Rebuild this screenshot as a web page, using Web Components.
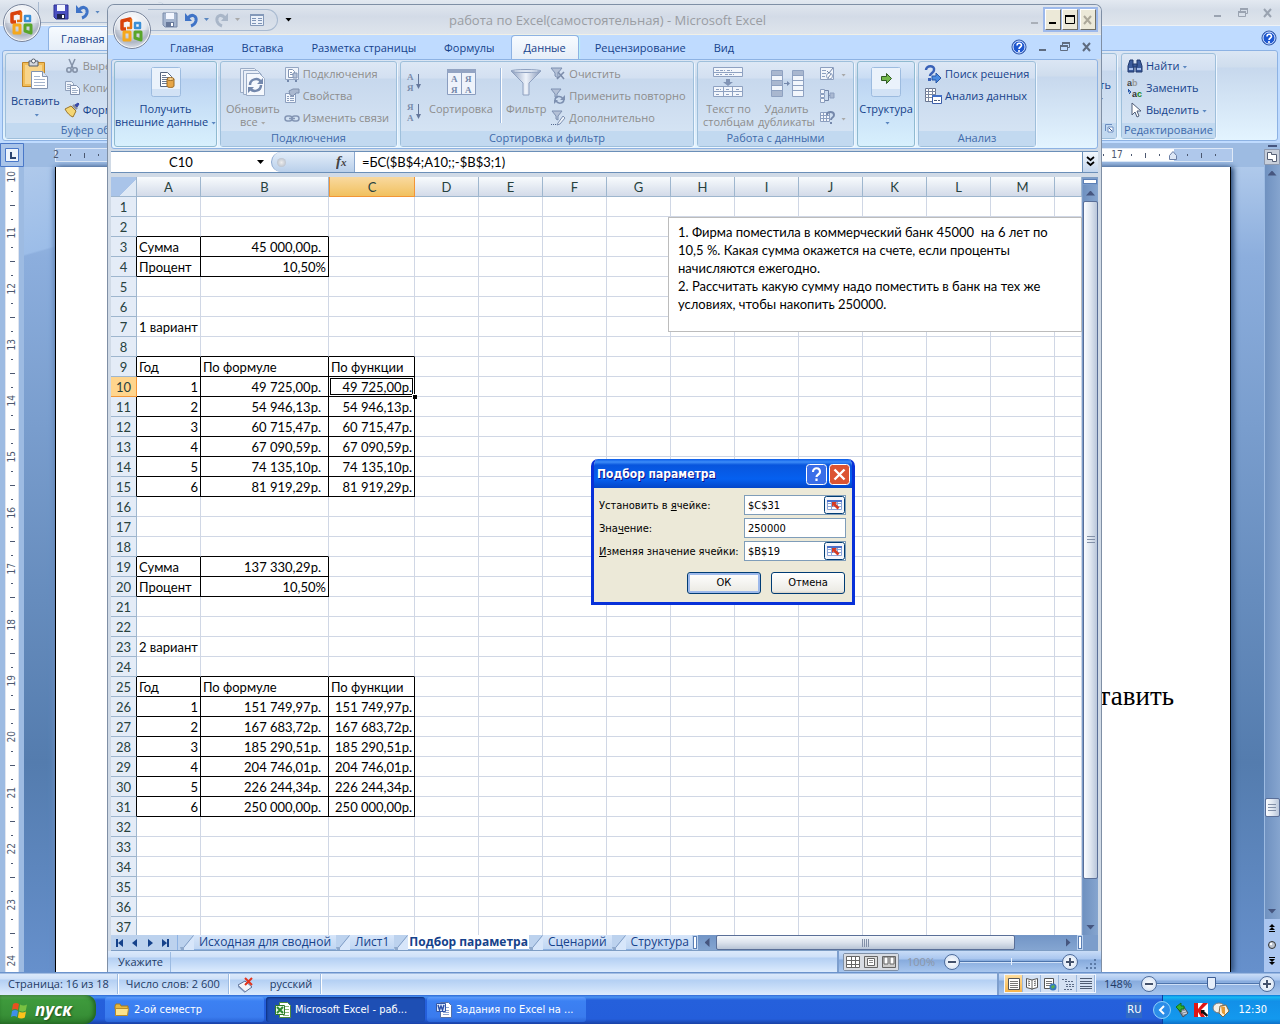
<!DOCTYPE html>
<html lang="ru">
<head>
<meta charset="utf-8">
<title>Microsoft Excel - работа по Excel</title>
<style>
    html, body {
        height: 100%;
        margin: 0;
    }

    body {
        font: 11px/14px "Open Sans", "Noto Sans", sans-serif;
        color: #15428b;
        overflow: hidden;
    }
</style>
</head>
<body>
<xp-desktop>
    <word-window></word-window>
    <excel-window></excel-window>
    <goal-dialog></goal-dialog>
    <task-bar slot="taskbar"></task-bar>
</xp-desktop>

<script>
// name: [width, height, svg content]
const ICONS = {
    office: [40, 40, `
        <defs>
            <radialGradient id="o" cx=".5" cy=".25" r=".8"><stop offset="0" stop-color="#fff"/><stop offset=".55" stop-color="#e3e7ee"/><stop offset=".75" stop-color="#b4bcc9"/><stop offset="1" stop-color="#f7f9fc"/></radialGradient>
        </defs>
        <circle cx="20" cy="20" r="18.500" fill="#f5f7fa" stroke="#77839a"/>
        <circle cx="20" cy="20" r="17" fill="url(#o)"/>
        <path d="M3 20a17 17 0 0 0 34 0z" fill="#9aa5b8" opacity=".25"/>
        <g fill="none" stroke-linejoin="round">
            <path d="M14 19h-4v-8l8-2v3" stroke="#d9420c" stroke-width="3.500"/><path d="M19 9v9h-4" stroke="#e8710f" stroke-width="2.500"/>
            <path d="M23 13h5v5h-5z" stroke="#3b8fd6" stroke-width="2.500"/>
            <path d="M12 22h6v8h-6z" stroke="#f5a81c" stroke-width="3"/>
            <path d="M23 22h6v8l-6-2z" stroke="#58a52a" stroke-width="3"/>
        </g>`],
    save: [16, 16, `<path d="M1 1h14v14H3l-2-2z" fill="#4a4fc0" stroke="#2d3192"/><path d="M4 1h8v6H4z" fill="#f3f6ff"/><path d="M4 10h8v5H4z" fill="#20254f"/><path d="M9 11h2v3H9z" fill="#fff"/>`],
    savegray: [16, 16, `<path d="M1 1h14v14H3l-2-2z" fill="#a4b4ce" stroke="#7d8dab"/><path d="M4 1h8v6H4z" fill="#f3f6ff"/><path d="M4 10h8v5H4z" fill="#68799a"/><path d="M9 11h2v3H9z" fill="#fff"/>`],
    undo: [16, 16, `<path d="M5 6c4-5 9-2 8 3-.5 2-2 4-5 5" fill="none" stroke="#3f73c7" stroke-width="3"/><path d="M2 1v8h7z" fill="#3f73c7"/>`],
    redo: [16, 16, `<path d="M11 6C7 1 2 4 3 9c.5 2 2 4 5 5" fill="none" stroke="#a9b6c8" stroke-width="3"/><path d="M14 1v8H7z" fill="#a9b6c8"/>`],
    form: [16, 16, `<path d="M1.500 2.500h13v11h-13z" fill="#eaf0f9" stroke="#8398b8"/><path d="M1 2h14v2H1z" fill="#8398b8"/><path d="M3 6.500h4M3 8.500h4M3 11.500h4M9 6.500h4M9 8.500h4M9 11.500h4" stroke="#7d93b6"/>`],
    paste: [32, 32, `<path d="M3.500 4.500h22v24h-22z" fill="#f1bd58" stroke="#c08527"/><path d="M6 7h17v19H6z" fill="#f8d48a"/><path d="M10 3h9v5h-9z" fill="#d4d8de" stroke="#555d69"/><circle cx="14.500" cy="3" r="2" fill="#fff" stroke="#555d69"/><path d="M12.500 13.500h11l5 5v12h-16z" fill="#fff" stroke="#8293af"/><path d="M23.500 13.500v5h5" fill="#dde6f3" stroke="#8293af"/><path d="M15 18.500h6M15 21.500h11M15 24.500h11M15 27.500h11" stroke="#a4b3cb"/>`],
    cut: [16, 16, `<path d="M5 1l4 9M11 1L7 10" stroke="#8492a8" stroke-width="1.500"/><circle cx="5" cy="12" r="2.200" fill="none" stroke="#8492a8" stroke-width="1.600"/><circle cx="11" cy="12" r="2.200" fill="none" stroke="#8492a8" stroke-width="1.600"/>`],
    copy: [16, 16, `<path d="M1.500 1.500h6l2 2v7h-8z" fill="#eef3fa" stroke="#8fa0bb"/><path d="M3 4.500h4M3 6.500h5M3 8.500h4" stroke="#9fafc7"/><path d="M6.500 5.500h6l3 3v6h-9z" fill="#f7faff" stroke="#8090ad"/><path d="M8 8.500h4M8 10.500h6M8 12.500h5" stroke="#9fafc7"/>`],
    brush: [16, 16, `<path d="M1 7l6-3 5 5-3 6C6 14 3 11 1 7z" fill="#f4d674" stroke="#9b7529"/><path d="M8 4l4 4 2-2-4-4z" fill="#8a8fa0"/><path d="M11 3l3-2 1 1-2 3z" fill="#3647a8" stroke="#3647a8"/>`],
    getdata: [32, 32, `<rect x="1.500" y="1.500" width="29" height="29" rx="2" fill="#d2e2f5" stroke="#9cbbdf"/><path d="M2 2h28v21H2z" fill="#eaf2fb"/><path d="M10.500 6.500h7l4 4v10h-11z" fill="#fff" stroke="#55657e"/><path d="M12 9.500h4M12 11.500h7M12 13.500h5M12 15.500h5M12 17.500h5" stroke="#6a7a93"/><path d="M17 13v7c0 2 7 2 7 0v-7z" fill="#e7a647" stroke="#9b6a25"/><ellipse cx="20.500" cy="13" rx="3.500" ry="1.500" fill="#fbd592" stroke="#9b6a25"/>`],
    refresh: [32, 32, `<g fill="#e9eff8" stroke="#9bacc6"><path d="M3.500 2.500h14l4 4v20h-18z"/><path d="M6.500 4.500h14l4 4v20h-18z"/><path d="M9.500 7.500h13l5 5v17h-18z" fill="#f5f8fd"/></g><path d="M13 19c0-6 8-8 11-3M24 19c0 6-8 8-11 3" fill="none" stroke="#7388ad" stroke-width="2.500"/><path d="M26 12v6h-6zM11 27v-6h6z" fill="#7388ad"/>`],
    connections: [16, 16, `<path d="M1.500 1.500h13v12h-13z" fill="#eef3fb" stroke="#94a6c3"/><path d="M4.500 3.500h4l2 2v6h-6z" fill="#fff" stroke="#8294b3"/><path d="M6 6.500h2M6 8.500h3" stroke="#8294b3"/><path d="M9 7h4v5H9z" fill="#b5c2d8" stroke="#8294b3"/><path d="M3 15h2M11 15h2" stroke="#7489ac" stroke-width="2"/>`],
    properties: [16, 16, `<path d="M1.500 5.500h10v9h-10z" fill="#f3f7fd" stroke="#8c9fbe"/><path d="M3 8.500h2M3 10.500h2M3 12.500h2M6 8.500h4M6 10.500h4M6 12.500h4" stroke="#8c9fbe"/><path d="M5 3l4-2h6v4h-3l-3 3-3-1z" fill="#aab8cf" stroke="#7f90ad"/>`],
    links: [16, 16, `<g fill="none" stroke="#8496b5" stroke-width="1.500"><rect x="1" y="6" width="7" height="5" rx="2.500"/><rect x="8" y="6" width="7" height="5" rx="2.500"/><path d="M5 8.500h6"/></g>`],
    sortaz: [16, 20, `<g font-family="Liberation Serif" font-weight="bold" font-size="9" fill="#7a8cab"><text x="1" y="8">А</text><text x="1" y="19">Я</text></g><path d="M12.500 2v12" stroke="#64779b"/><path d="M10 12h5l-2.500 5z" fill="#64779b"/>`],
    sortza: [16, 20, `<g font-family="Liberation Serif" font-weight="bold" font-size="9" fill="#7a8cab"><text x="1" y="8">Я</text><text x="1" y="19">А</text></g><path d="M12.500 2v12" stroke="#64779b"/><path d="M10 12h5l-2.500 5z" fill="#64779b"/>`],
    sort: [32, 32, `<path d="M2.500 3.500h28v25h-28z" fill="#eef3fb" stroke="#8a9dbf"/><path d="M2 3h29v4H2z" fill="#93a4c3"/><path d="M16.500 7v22" stroke="#8a9dbf"/><g font-family="Liberation Serif" font-weight="bold" font-size="9" fill="#7286aa"><text x="6" y="16">А</text><text x="6" y="27">Я</text><text x="20" y="16">Я</text><text x="20" y="27">А</text></g>`],
    funnel: [32, 32, `<defs><linearGradient id="f"><stop offset="0" stop-color="#8b9dbd"/><stop offset=".5" stop-color="#eef3fb"/><stop offset="1" stop-color="#8798b8"/></linearGradient></defs><path d="M1 5h30L19 17v12h-6V17z" fill="url(#f)" stroke="#8fa1c0"/><ellipse cx="16" cy="5" rx="15" ry="1.500" fill="#dfe7f3" stroke="#8fa1c0"/>`],
    clear: [16, 16, `<path d="M1 2h11L8 7v5l-3-2V7z" fill="#b4c1d7" stroke="#7d90b1"/><path d="M8 6l6 7M14 6l-7 7" stroke="#7d8dab" stroke-width="1.600"/>`],
    reapply: [16, 16, `<path d="M1 1h10L7 6v4L5 9V6z" fill="#b4c1d7" stroke="#7d90b1"/><path d="M5 12c0-4 6-5 8-1M14 12c-1 4-6 4-8 1" fill="none" stroke="#7d90b1" stroke-width="1.500"/><path d="M15 7v5h-5zM4 16v-4h4z" fill="#7d90b1"/>`],
    advanced: [16, 16, `<path d="M2 1h10L8 6v4L6 9V6z" fill="#b4c1d7" stroke="#7d90b1"/><path d="M1 14.500h7" stroke="#54698f" stroke-dasharray="1 1"/><path d="M8 13l5-7 2 2-5 6-3 1z" fill="#eef3fa" stroke="#7d90b1"/>`],
    textcols: [32, 32, `<g fill="#f2f6fc" stroke="#8ea1c1"><path d="M1.500 1.500h29v9h-29zM1.500 20.500h29v10h-29z"/><path d="M1 6.500h29M1 25.500h29M11.500 20v10M20.500 20v10" fill="none"/></g><path d="M4 4.500h9M15 4.500h5M4 8.500h6M13 8.500h9M4 23.500h5M14 23.500h4M24 23.500h4M4 28.500h4M14 28.500h4M24 28.500h4" stroke="#8ea1c1" stroke-dasharray="3 1"/><path d="M14 13h4v3h3l-5 4-5-4h3z" fill="#8194b5"/>`],
    dedupe: [34, 32, `<g stroke="#8ea1c1" fill="#f2f6fc"><path d="M1.500 4.500h11v26h-11zM22.500 4.500h11v26h-11z"/></g><g fill="#a9b7cf"><path d="M2 5h10v5H2zM2 15h10v5H2zM2 25h10v5H2zM23 5h10v5H23z"/></g><path d="M2 9.500h10M2 14.500h10M2 19.500h10M2 24.500h10M23 9.500h10M23 14.500h10M23 19.500h10M23 24.500h10" stroke="#8ea1c1"/><path d="M14 17.500h4" stroke="#7488ac"/><path d="M17 15v5l3-2.500z" fill="#7488ac"/>`],
    validate: [16, 16, `<path d="M1.500 1.500h13v12h-13z" fill="#f1f5fb" stroke="#8c9fbf"/><path d="M3 4.500h4M3 7.500h4M3 10.500h3" stroke="#8c9fbf"/><circle cx="10.500" cy="10" r="3" fill="#fff" stroke="#8c9fbf"/><path d="M8 5l2 2 4-5M9 12l3-4" fill="none" stroke="#7285a7"/>`],
    consolidate: [16, 16, `<path d="M1.500 1.500h4v4h-4zM1.500 6.500h4v3h-4zM1.500 10.500h4v4h-4z" fill="#f1f5fb" stroke="#8c9fbf"/><path d="M6 2.500h3.500v10H6M9 7.500h2" fill="none" stroke="#7285a7"/><path d="M11 5h4v5h-4z" fill="#aab9d2" stroke="#8c9fbf"/>`],
    whatif: [16, 16, `<path d="M1.500 2.500h9v9h-9z" fill="#f1f5fb" stroke="#8c9fbf"/><path d="M1 5.500h9M1 8.500h9M4.500 2v9M7.500 2v9" stroke="#8c9fbf"/><path d="M8 5c0-4 7-4 7 0 0 3-3 2-3 5" fill="none" stroke="#7588ab" stroke-width="2"/><path d="M11 12h2v2h-2z" fill="#7588ab"/>`],
    outline: [32, 32, `<rect x="1.500" y="1.500" width="29" height="29" rx="2" fill="#d2e2f5" stroke="#9cbbdf"/><path d="M2 2h28v21H2z" fill="#eaf2fb"/><path d="M11.500 10.500h5v-3l5 5-5 5v-3h-5z" fill="#72b74a" stroke="#2f5a25"/>`],
    solver: [18, 18, `<path d="M2 5c0-5 9-5 8 0 0 3-4 3-4 6" fill="none" stroke="#3a62b8" stroke-width="2.500"/><path d="M4 13h3v3H4z" fill="#3a62b8"/><path d="M8 11h4V8l5 5-5 5v-3H8z" fill="#4a8be0" stroke="#2757a8"/>`],
    analysis: [18, 18, `<path d="M1.500 1.500h10v13h-10z" fill="#fff" stroke="#6a7690"/><path d="M1 4.500h11M1 7.500h11M1 10.500h11M4.500 1v13M8.500 1v13" stroke="#7c88a0"/><path d="M8.500 8.500h9v8h-9z" fill="#fff" stroke="#3b5da8"/><path d="M8 8h10v2H8z" fill="#4270c8"/><path d="M10 13.500h3M14 13.500h2" stroke="#4a5a7a"/>`],
    find: [16, 16, `<g fill="#3c5c9c" stroke="#20386c"><path d="M3 2h3v5l1 2v5H1V8zM10 2h3l2 6v6H9V9l1-2z"/><path d="M6 6h4v3H6z"/></g><path d="M2 11h4M10 11h4" stroke="#a8c0ec" stroke-width="2"/>`],
    replace: [16, 20, `<g font-family="Liberation Sans" font-weight="bold" font-size="9"><text x="0" y="8" fill="#444">a<tspan fill="#999">b</tspan></text><text x="5" y="19" fill="#333">a<tspan fill="#1a8a22">c</tspan></text></g><path d="M1.500 11v3H4M2 12l2 2-2 2" fill="none" stroke="#2757a8"/>`],
    cursor: [16, 16, `<path d="M5 1v12l3-3 2 5 2-1-2-5h4z" fill="#fff" stroke="#4f5d78"/>`],
    help: [16, 16, `<circle cx="8" cy="8" r="7" fill="#1d57d0" stroke="#2a4f9c"/><circle cx="8" cy="8" r="6" fill="none" stroke="#dbe8ff"/><path d="M6 6.500c0-3 4.500-3 4.500 0C10.500 8 8 8 8 10M8 11v2" fill="none" stroke="#fff" stroke-width="1.600"/>`],
    min: [12, 12, `<path d="M2 9h7" stroke="currentColor" stroke-width="2"/>`],
    restore: [12, 12, `<path d="M3.500 4V1.500h7v5H9M1.500 4.500h7v5h-7z" fill="none" stroke="currentColor"/><path d="M3 2h8M1 5h8" stroke="currentColor" stroke-width="2"/>`],
    max: [12, 12, `<path d="M1.500 1.500h9v8h-9z" fill="none" stroke="currentColor"/><path d="M1 2h10" stroke="currentColor" stroke-width="2"/>`],
    close: [12, 12, `<path d="M2 2l7 8M9 2l-7 8" stroke="currentColor" stroke-width="2"/>`],
    fx: [14, 16, `<text x="0" y="12" font-family="Liberation Serif" font-style="italic" font-weight="bold" font-size="15" fill="#444">f<tspan font-size="11">x</tspan></text>`],
    expand: [12, 14, `<path d="M2 3l3.500 3L9 3M2 8l3.500 3L9 8" fill="none" stroke="#000" stroke-width="1.800"/>`],
    tabstop: [24, 24, `<path d="M.500.500h23v23H.500z" fill="#a9c4e9" stroke="#4a78c8"/><path d="M5.500 5.500h13v13h-13z" fill="#eef4fc" stroke="#4a78c8"/><path d="M11 9v6h5" fill="none" stroke="#2b4470" stroke-width="2"/>`],
    indent: [10, 10, `<path d="M1.500 9.500v-4L5 1.500l3.500 4v4z" fill="#dce6f5" stroke="#6b7fa5"/>`],
    rulerbtn: [16, 16, `<path d="M.500.500h15v15H.500z" fill="#c8cfdb" stroke="#8d99af"/><path d="M3.500 3.500h4v2h5v7h-4v-2h-5z" fill="#fff" stroke="#555f75"/>`],
    launcher: [10, 10, `<path d="M1.500 8V1.500H8" fill="none" stroke="#6a8cc0"/><path d="M4 4h5v5H4z" fill="#fff" stroke="#6a8cc0"/><path d="M5 5l3 3" stroke="#3c5c94"/>`],
    pageup: [10, 12, `<path d="M5 2L2 5h6zM5 5L2 8h6zM2 9h6v1H2z" fill="#000"/>`],
    ball: [10, 10, `<circle cx="5" cy="5" r="3.500" fill="#bcc3cf" stroke="#333"/><circle cx="4" cy="4" r="1.200" fill="#fff"/>`],
    pagedown: [10, 12, `<path d="M2 1h6v1H2zM2 3h6L5 6zM2 6h6L5 9z" fill="#000"/>`],
    first: [10, 10, `<path d="M1 1h2v8H1zM8 1v8L3 5z" fill="#15428b"/>`],
    prev: [10, 10, `<path d="M7 1v8L2 5z" fill="#15428b"/>`],
    next: [10, 10, `<path d="M3 1v8l5-4z" fill="#15428b"/>`],
    last: [10, 10, `<path d="M7 1h2v8H7zM2 1v8l5-4z" fill="#15428b"/>`],
    normal: [14, 12, `<path d="M.500.500h13v11H.500zM0 4.500h14M0 8.500h14M5.500 0v12M9.500 0v12" fill="#fff" stroke="#666"/>`],
    layout: [14, 12, `<path d="M.500.500h13v11H.500z" fill="#ddd" stroke="#666"/><path d="M3.500 2.500h7v7h-7z" fill="#fff" stroke="#666"/><path d="M5 4.500h4M5 6.500h4" stroke="#888"/>`],
    breaks: [14, 12, `<path d="M.500.500h13v11H.500z" fill="#ccc" stroke="#666"/><path d="M2 1h4v7H2zM8 1h4v7H8z" fill="#fff" stroke="#666"/>`],
    print: [14, 14, `<path d="M1.500 1.500h11v11h-11z" fill="#fff" stroke="#555"/><path d="M3 4.500h8M3 6.500h8M3 8.500h8M3 10.500h8" stroke="#777"/>`],
    reading: [14, 14, `<path d="M7 3L1.500 1.500v9L7 12l5.500-1.500v-9z" fill="#fff" stroke="#555"/><path d="M7 3v10M3 4l2 .5M3 6l2 .5M3 8l2 .5M9 4.500l2-.5M9 6.500l2-.5M9 8.500l2-.5" stroke="#666"/>`],
    web: [14, 14, `<path d="M1.500 1.500h9v10h-9z" fill="#fff" stroke="#555"/><path d="M3 4.500h6M3 6.500h6M3 8.500h4" stroke="#777"/><circle cx="10" cy="10" r="3.500" fill="#3878c0"/><path d="M8 9l3-1 1 2-3 2z" fill="#56b04c"/>`],
    outlineview: [14, 14, `<path d="M1 2.500h6M4 4.500h9M5 7.500h8M5 9.500h8M3 12.500h9" stroke="#5b6b86" stroke-dasharray="2 1"/>`],
    draft: [14, 14, `<path d="M1 1.500h12M1 4.500h12M1 6.500h12M1 9.500h12M1 11.500h12" stroke="#4f5c72"/>`],
    spell: [18, 16, `<path d="M1 8l7-4 7 6-7 5z" fill="#f4f6fa" stroke="#5b6f95"/><path d="M1 8l7 6v2L1 10z" fill="#7f93b8"/><path d="M8 1l7 7M15 1L8 8" stroke="#e2341d" stroke-width="2"/>`],
    pick: [21, 18, `<rect x=".500" y=".500" width="20" height="17" rx="2" fill="#f4f5fa" stroke="#003c74"/><path d="M3.500 4.500h14v9h-14zM3 7.500h14M3 10.500h14M7.500 4v9M13.500 4v9" fill="#fff" stroke="#8ba4d8"/><path d="M3 4h15v2H3z" fill="#4c70c8"/><path d="M8 6h5l-1.500 1.500 4 4-2 2-4-4L8 11z" fill="#d63a22"/>`],
    flag: [20, 18, `<path d="M3 3c2-1.500 4-1.500 6 0L8 9C6 7.500 4 7.500 2 9z" fill="#e8501f"/><path d="M10 3.500c2 1.200 5 1.200 7 0l-1.200 6C14 11 11 11 9 9.500z" fill="#7ac142"/><path d="M2 10c2-1.500 4-1.500 6 0l-1 6c-2-1.500-4-1.500-6 0z" fill="#3f8fe8"/><path d="M9 10.500c2 1.200 5 1.200 7 0l-1.200 6c-2 1.200-5 1.200-7 0z" fill="#fcc21b"/>`],
    folder: [16, 16, `<path d="M1 4l1-2h4l1 2h7v3H1z" fill="#e8b93e" stroke="#a87d1c"/><path d="M1.500 6.500h13l-1 7h-12z" fill="#fde48c" stroke="#b98d28"/>`],
    excel: [16, 16, `<path d="M4.500.500h8l3 3v12h-11z" fill="#fff" stroke="#4f8a3d"/><path d="M8 4.500h6M8 7.500h6M8 10.500h6M8 13.500h6" stroke="#8cba80"/><path d="M.500 3.500h9v9h-9z" fill="#eaf6e4" stroke="#2f7a2a"/><path d="M2 5l6 6M8 5l-6 6" stroke="#2b8a2f" stroke-width="2"/>`],
    word: [16, 16, `<path d="M4.500.500h8l3 3v12h-11z" fill="#fff" stroke="#5470a8"/><path d="M7 5.500h6M7 8.500h6M7 10.500h6M7 12.500h6" stroke="#8fa6d4"/><path d="M.500 1.500h9v8h-9z" fill="#dce7fa" stroke="#3157a8"/><path d="M2 3l1.500 5L5 4l1.500 4L8 3" fill="none" stroke="#2a4fa8" stroke-width="1.400"/>`],
    chevron: [18, 18, `<circle cx="9" cy="9" r="8.500" fill="#2b8de8" stroke="#8fd0fb"/><path d="M11 5L7 9l4 4" fill="none" stroke="#fff" stroke-width="2"/>`],
    usb: [16, 16, `<path d="M4 7l6-2 4 6-5 4z" fill="#8b93a0" stroke="#4a525e"/><path d="M8 10l4-1M9 12l4-1" stroke="#d8dde5"/><path d="M2 5l5-4v3h3v3H7v3z" fill="#34b22f" stroke="#14701a"/>`],
    kasper: [16, 16, `<path d="M1 1h14v14H1z" fill="#fff"/><path d="M1 1h4v6l5-6h5L8 8l4 7H8L5 10v5H1z" fill="#e01616"/><path d="M8 8h4l-1 1 4 4-1 2-5-4-1 1z" fill="#111"/>`],
    disc: [18, 16, `<ellipse cx="7" cy="6" rx="6" ry="5" fill="#f3f0ea" stroke="#777"/><path d="M8 4l6-1 3 6-6 6-4-4z" fill="#f7efdc" stroke="#7b6a4a"/><path d="M9 4l4 1v8l-3-2z" fill="#e59a34"/>`],
    grip: [12, 12, `<path d="M9 1h2v2H9zM5 5h2v2H5zM9 5h2v2H9zM1 9h2v2H1zM5 9h2v2H5zM9 9h2v2H9z" fill="#5c7ba8"/>`],
    qmark: [21, 21, `<rect x=".500" y=".500" width="20" height="20" rx="3" fill="#3a6ee8" stroke="#fff"/><path d="M7 8c0-5 7-5 7 0 0 2.500-3.500 2.500-3.500 5M10.500 14.500v2.500" fill="none" stroke="#fff" stroke-width="2.200"/>`],
    xmark: [21, 21, `<rect x=".500" y=".500" width="20" height="20" rx="3" fill="#dc5432" stroke="#fff"/><path d="M5.500 5.500l10 10M15.500 5.500l-10 10" stroke="#fff" stroke-width="2.400"/>`],
    slant: [14, 15, `<path d="M2 15h12V0z" fill="#d7e6fa"/><path d="M2 14.500L13.500.500" stroke="#7f9cc4" fill="none"/><path d="M0 12h4v3H1z" fill="#8fa9cc"/>`],
};

function define(name, markup) {
    customElements.define(name, class extends HTMLElement {
        constructor() {
            super();
            this.attachShadow({ mode: 'open' });
            const template = document.createElement('template');
            template.innerHTML = markup;
            this.shadowRoot.appendChild(template.content.cloneNode(true));
        }
    });
}

class UiIcon extends HTMLElement {
    constructor() {
        super();
        this.attachShadow({ mode: 'open' });
    }

    connectedCallback() {
        const [w, h, body] = ICONS[this.getAttribute('name')];
        this.shadowRoot.innerHTML = `
            <style>:host { display: inline-block; flex: none; } svg { display: block; }</style>
            <svg width="${w}" height="${h}" viewBox="0 0 ${w} ${h}" aria-hidden="true">${body}</svg>`;
    }
}
customElements.define('ui-icon', UiIcon);

define('down-arrow', `
    <style>
        :host { display: inline-block; width: 5px; height: 3px; background: #5b87c0; clip-path: polygon(0 0, 100% 0, 50% 100%); vertical-align: middle; flex: none; }
        :host([muted]) { background: #a9a9a9; }
        :host([dark]) { width: 7px; height: 4px; background: #000; }
    </style>
`);

define('ribbon-tab', `
    <style>
        :host { display: block; }
        button {
            font: inherit; color: #15428b; height: 24px; padding: 2px 14px 0; border: 0;
            background: none; display: block; white-space: nowrap;
        }
        :host([active]) button {
            border: 1px solid #8db2e3; border-bottom: 0; border-radius: 4px 4px 0 0; padding: 1px 12px 0;
            margin: 0 2px; background: linear-gradient(#f7fbff, #e6eef8); box-shadow: 1px 0 1px #b8f0f8;
        }
    </style>
    <button type="button"><slot></slot></button>
`);

define('ribbon-group', `
    <style>
        :host {
            display: flex; flex-direction: column; box-sizing: border-box; height: 86px; flex: none;
            border: 1px solid #9ebfdb; border-radius: 3px;
            background: linear-gradient(#dde8f5, #d3e0f1 16px, #c7d8ed 17px, #d8e6f5);
            box-shadow: 1px 1px 0 #eef6ff;
        }
        .content { flex: 1; display: flex; padding: 1px 3px; min-height: 0; }
        .label { height: 15px; line-height: 14px; padding: 0 2px; text-align: center; color: #3e6aaa; background: #c2d9f0; white-space: nowrap; display: flex; justify-content: center; }
        .label span { flex: 1; }
        :host([collapsed]) { background: linear-gradient(#dce9f9, #c9dcf3 16px, #bcd4f2 17px, #d8f0fd); border-color: #8fbad0; }
        :host([collapsed]) .label { display: none; }
        :host([collapsed]) .content { justify-content: center; padding: 1px 0; }
    </style>
    <div class="content"><slot></slot></div>
    <div class="label"><span><slot name="label"></slot></span><slot name="launcher"></slot></div>
`);

define('ribbon-column', `
    <style>
        :host { display: flex; flex-direction: column; }
        :host([spread]) { padding-top: 8px; gap: 8px; }
    </style>
    <slot></slot>
`);

class RibbonButton extends HTMLElement {
    constructor() {
        super();
        this.attachShadow({ mode: 'open' });
    }

    // a large button breaks its label at "|"
    connectedCallback() {
        const muted = this.hasAttribute('muted') ? 'muted' : '';
        const arrow = this.hasAttribute('arrow') ? `<down-arrow ${muted}></down-arrow>` : '';
        const label = (this.getAttribute('label') || '').split('|').join('<br>');
        this.shadowRoot.innerHTML = `
            <style>
                :host { display: block; flex: none; }
                button {
                    font: inherit; color: #15428b; background: none; border: 0; margin: 0; height: 22px;
                    display: flex; align-items: center; gap: 3px; padding: 0 2px; white-space: nowrap;
                }
                button.muted { color: #8d8d8d; }
                down-arrow { margin-left: 3px; }
                :host([large]) button { flex-direction: column; height: 66px; padding: 3px 2px 0; gap: 4px; line-height: 13px; }
            </style>
            <button type="button" class="${muted}">
                <ui-icon name="${this.getAttribute('icon')}"></ui-icon>
                <span>${label}${arrow}</span>
            </button>`;
    }
}
customElements.define('ribbon-button', RibbonButton);

class ScrollBar extends HTMLElement {
    constructor() {
        super();
        this.attachShadow({ mode: 'open' });
    }

    connectedCallback() {
        const before = this.getAttribute('before') || 0;
        const after = this.getAttribute('after') || 0;
        const size = this.getAttribute('size');
        this.shadowRoot.innerHTML = `
            <style>
                :host { display: flex; flex-direction: column; width: 15px; background: linear-gradient(90deg, #6f91c0, #86a5cf); }
                .thumb {
                    box-sizing: border-box; border: 1px solid #5a6f98; border-radius: 2px; flex: ${size} 0 0; min-height: 16px; min-width: 15px;
                    background: linear-gradient(90deg, #fafcff, #dfe6f0 50%, #b9c6da); display: grid; place-items: center;
                }
                .grip { width: 8px; height: 8px; background: repeating-linear-gradient(#8290a8 0 1px, transparent 1px 3px); }
                .end { flex: 0 0 16px; display: grid; place-items: center; }
                .end i { width: 9px; height: 5px; background: #46567f; clip-path: polygon(50% 0, 100% 100%, 0 100%); }
                .end.last i { clip-path: polygon(0 0, 100% 0, 50% 100%); }
                :host([horizontal]) { flex-direction: row; width: auto; height: 15px; background: linear-gradient(#7295c6, #84a5d1); }
                :host([horizontal]) .thumb { background: linear-gradient(#f5f8fc, #dce3ed 50%, #b8c4d6); min-height: 0; }
                :host([horizontal]) .grip { background: repeating-linear-gradient(90deg, #8290a8 0 1px, transparent 1px 2px); }
                :host([horizontal]) .end { flex-basis: 18px; }
                :host([horizontal]) .end i { width: 5px; height: 9px; clip-path: polygon(0 50%, 100% 0, 100% 100%); }
                :host([horizontal]) .end.last i { clip-path: polygon(0 0, 100% 50%, 0 100%); }
            </style>
            <div class="end"><i></i></div>
            <div style="flex: ${before}"></div>
            <div class="thumb"><div class="grip"></div></div>
            <div style="flex: ${after}"></div>
            <div class="end last"><i></i></div>`;
    }
}
customElements.define('scroll-bar', ScrollBar);

class ZoomSlider extends HTMLElement {
    constructor() {
        super();
        this.attachShadow({ mode: 'open' });
    }

    connectedCallback() {
        this.shadowRoot.innerHTML = `
            <style>
                :host { display: flex; align-items: center; }
                button {
                    width: 16px; height: 16px; padding: 0; border: 1px solid #4f6d9c; border-radius: 50%; flex: none; position: relative;
                    background: radial-gradient(#fff, #ccdcf2);
                }
                button::before, button.plus::after { content: ""; position: absolute; left: 3px; top: 6px; width: 8px; height: 2px; background: #44526c; }
                button.plus::after { transform: rotate(90deg); }
                input {
                    appearance: none; width: 102px; height: 16px; margin: 0;
                    background: linear-gradient(#e8f1fd, #e8f1fd) center / 1px 7px no-repeat, linear-gradient(#4d74ac 1px, #cfe0f7 1px) center / 100% 2px no-repeat;
                }
                input::-webkit-slider-thumb {
                    appearance: none; width: 9px; height: 13px; background: #e6eefa; border: 1px solid #3f5f94; border-radius: 1px 1px 5px 5px;
                }
                :host([nothumb]) input::-webkit-slider-thumb { opacity: 0; }
            </style>
            <button type="button" aria-label="Уменьшить"></button>
            <input type="range" aria-label="Масштаб" min="0" max="100" value="${this.getAttribute('value')}">
            <button type="button" class="plus" aria-label="Увеличить"></button>`;
    }
}
customElements.define('zoom-slider', ZoomSlider);

// ruler marks: number, dot, half-centimetre line, dot
class RulerMarks extends HTMLElement {
    constructor() {
        super();
        this.attachShadow({ mode: 'open' });
    }

    connectedCallback() {
        const marks = this.getAttribute('marks').split(' ').map(mark => {
            if (mark === '.') return '<i class="dot"></i>';
            if (mark === '-') return '<i class="line"></i>';
            if (mark === '^') return '<ui-icon name="indent"></ui-icon>';
            return `<span>${mark}</span>`;
        });
        this.shadowRoot.innerHTML = `
            <style>
                :host { display: flex; font: 10px/12px "DejaVu Sans Condensed", sans-serif; color: #4c5870; overflow: hidden; }
                div { flex: 0 0 14px; display: grid; place-items: center; }
                .dot { width: 1px; height: 2px; background: #4c5870; }
                .line { width: 1px; height: 5px; background: #4c5870; }
                :host([vertical]) { flex-direction: column; }
                :host([vertical]) span { writing-mode: vertical-rl; transform: rotate(180deg); }
                :host([vertical]) .dot { width: 2px; height: 1px; }
                :host([vertical]) .line { width: 5px; height: 1px; }
            </style>
            ${marks.map(mark => `<div>${mark}</div>`).join('')}`;
    }
}
customElements.define('ruler-marks', RulerMarks);

let verticalMarks = [];
for (let i = 10; i < 25; i++) {
    verticalMarks.push(i, '.', '-', '.');
}

define('word-window', `
    <style>
        :host { display: flex; flex-direction: column; height: 100%; background: #bfdbff; }
        .caption { flex: 0 0 26px; display: flex; align-items: center; background: linear-gradient(#e3e9f1, #d5dde8 40%, #dfe5ec); border-bottom: 1px solid #eef2f6; box-sizing: border-box; }
        .office { position: absolute; left: 2px; top: 3px; }
        .qat { display: flex; align-items: center; gap: 5px; margin-left: 38px; padding-left: 14px; width: 130px; height: 21px; border: 1px solid #a9bad0; border-top: 0; border-radius: 0 11px 11px 0; box-sizing: border-box; }
        .controls { margin-left: auto; display: flex; gap: 13px; color: #9aa3b1; padding-right: 6px; }
        .tabs { flex: 0 0 24px; display: flex; align-items: flex-end; padding-left: 46px; }
        .tabs ui-icon { margin: 0 3px 4px auto; }
        .ribbon { flex: none; margin: 0 2px; display: flex; box-sizing: border-box; height: 91px; padding: 2px 2px; border: 1px solid #8db2e3; border-radius: 3px; background: linear-gradient(#dbe6f4, #cfdded 16px, #c7d8ed 17px, #e3f4ff); }
        .ribbon .clipboard { min-width: 170px; }
        .ribbon .styles { margin-left: auto; margin-right: 4px; }
        .ribbon .edit { margin-right: 59px; min-width: 93px; }
        .body { flex: 1; display: grid; grid-template: 24px 1fr / 24px 1fr 16px; min-height: 0; margin-top: 2px; background: #9dbbe2; }
        .hruler { display: flex; align-items: center; padding: 0 31px; }
        .hruler div { flex: 1; display: flex; justify-content: space-between; height: 12px; border: 1px solid #dfe9f7; background: linear-gradient(90deg, #afc8eb 58px, #fff 58px calc(100% - 58px), #afc8eb calc(100% - 58px)); }
        .left { margin-left: -7px; }
        .right { margin-right: 10px; }
        .vruler { overflow: hidden; margin: 0 5px; border: solid #dfe5f0; border-width: 0 1px; background: #fff; padding-top: 3px; }
        .canvas { min-width: 0; padding: 0 33px 0 31px; background: linear-gradient(164deg, #afc9eb, #9cbde8 84px, transparent 86px), linear-gradient(#afc9eb, #8caedd 90px, #547cae 74%, #6690cc); }
        .page { height: 100%; background: #fff; border: solid #000; border-width: 0 1px; box-sizing: border-box; box-shadow: 3px 0 5px #33537f, -2px 0 5px #6c8fc0; text-align: right; font: 27px/31px "Liberation Serif", serif; color: #000; padding: 514px 56px 0 0; }
        .page p { margin: 0; }
        .side { grid-column: 3; grid-row: 1 / 3; display: flex; flex-direction: column; align-items: center; }
        .side hr { width: 9px; height: 2px; border: 0; background: #46567f; margin: 2px 0 2px; }
        .side scroll-bar { flex: 1; }
        .browse { background: #abc6f0; display: flex; flex-direction: column; align-items: center; gap: 6px; padding: 3px 3px 4px; }
        .status { flex: 0 0 23px; display: flex; align-items: center; color: #1e3b66; background: linear-gradient(#6b93cc 1px, #dbe9fb 2px, #cfe1f8 7px, #b3cff3 8px, #dcebfd); }
        .status > span { line-height: 20px; border-right: 1px solid #9cbbe2; box-shadow: 1px 0 #fff; padding: 0 8px; white-space: nowrap; }
        .spell { vertical-align: middle; margin-right: 15px; }
        .tools { margin-left: auto; align-self: stretch; display: flex; align-items: center; padding: 0 5px; border-left: 2px solid #7d9fce; background: linear-gradient(#6b93cc 1px, #c8dcf7 2px, #a9c6ef 8px, #87abdd 9px, #a8c6ee); }
        .views { display: flex; border: 1px solid #f0f6ff; }
        .views button { width: 18px; height: 17px; padding: 0; border: 0; border-right: 1px solid #9db8dc; background: #d4e1f3; display: grid; place-items: center; }
        .views button:first-child { background: linear-gradient(#fddc9c, #f7b64d); }
        .zoom { margin: 0 9px 0 8px; }
    </style>
    <header class="caption">
        <ui-icon class="office" name="office"></ui-icon>
        <div class="qat"><ui-icon name="save"></ui-icon><ui-icon name="undo"></ui-icon><down-arrow></down-arrow></div>
        <div class="controls"><ui-icon name="min"></ui-icon><ui-icon name="restore"></ui-icon><ui-icon name="close"></ui-icon></div>
    </header>
    <nav class="tabs"><ribbon-tab active>Главная</ribbon-tab><ui-icon name="help"></ui-icon></nav>
    <div class="ribbon">
        <ribbon-group class="clipboard">
            <ribbon-button large icon="paste" label="Вставить|" arrow></ribbon-button>
            <ribbon-column>
                <ribbon-button icon="cut" label="Вырезать" muted></ribbon-button>
                <ribbon-button icon="copy" label="Копировать" muted></ribbon-button>
                <ribbon-button icon="brush" label="Формат по образцу"></ribbon-button>
            </ribbon-column>
            <span slot="label">Буфер обмена</span>
        </ribbon-group>
        <ribbon-group class="styles">
            <ribbon-button large icon="form" label="Изменить|стили" arrow></ribbon-button>
            <ui-icon slot="launcher" name="launcher"></ui-icon>
        </ribbon-group>
        <ribbon-group class="edit">
            <ribbon-column>
                <ribbon-button icon="find" label="Найти" arrow></ribbon-button>
                <ribbon-button icon="replace" label="Заменить"></ribbon-button>
                <ribbon-button icon="cursor" label="Выделить" arrow></ribbon-button>
            </ribbon-column>
            <span slot="label">Редактирование</span>
        </ribbon-group>
    </div>
    <div class="body">
        <ui-icon name="tabstop"></ui-icon>
        <div class="hruler"><div>
            <ruler-marks class="left" marks="2 . - ."></ruler-marks>
            <ruler-marks class="right" marks=". 17 . - . ^ . - ."></ruler-marks>
        </div></div>
        <ruler-marks class="vruler" vertical marks="${verticalMarks.join(' ')}"></ruler-marks>
        <div class="canvas"><div class="page"><p>вставить</p></div></div>
        <div class="side">
            <hr><ui-icon name="rulerbtn"></ui-icon>
            <scroll-bar before="617" size="17" after="86"></scroll-bar>
            <div class="browse"><ui-icon name="pageup"></ui-icon><ui-icon name="ball"></ui-icon><ui-icon name="pagedown"></ui-icon></div>
        </div>
    </div>
    <footer class="status">
        <span>Страница: 16 из 18</span><span>Число слов: 2 600</span>
        <span><ui-icon class="spell" name="spell"></ui-icon>русский</span>
        <div class="tools">
            <div class="views">
                <button type="button" aria-label="Разметка страницы"><ui-icon name="print"></ui-icon></button>
                <button type="button" aria-label="Режим чтения"><ui-icon name="reading"></ui-icon></button>
                <button type="button" aria-label="Веб-документ"><ui-icon name="web"></ui-icon></button>
                <button type="button" aria-label="Структура"><ui-icon name="outlineview"></ui-icon></button>
                <button type="button" aria-label="Черновик"><ui-icon name="draft"></ui-icon></button>
            </div>
            <span class="zoom">148%</span>
            <zoom-slider value="54"></zoom-slider>
        </div>
    </footer>
`);

const COLUMNS = 'ABCDEFGHIJKLM'.split('');
const ROWS = 37;

const CELLS = {
    3: ['Сумма', '45 000,00р.'],
    4: ['Процент', '10,50%'],
    7: ['1 вариант'],
    9: ['Год', 'По формуле', 'По функции'],
    10: ['1', '49 725,00р.', '49 725,00р.'],
    11: ['2', '54 946,13р.', '54 946,13р.'],
    12: ['3', '60 715,47р.', '60 715,47р.'],
    13: ['4', '67 090,59р.', '67 090,59р.'],
    14: ['5', '74 135,10р.', '74 135,10р.'],
    15: ['6', '81 919,29р.', '81 919,29р.'],
    19: ['Сумма', '137 330,29р.'],
    20: ['Процент', '10,50%'],
    23: ['2 вариант'],
    25: ['Год', 'По формуле', 'По функции'],
    26: ['1', '151 749,97р.', '151 749,97р.'],
    27: ['2', '167 683,72р.', '167 683,72р.'],
    28: ['3', '185 290,51р.', '185 290,51р.'],
    29: ['4', '204 746,01р.', '204 746,01р.'],
    30: ['5', '226 244,34р.', '226 244,34р.'],
    31: ['6', '250 000,00р.', '250 000,00р.'],
};

class SheetGrid extends HTMLElement {
    constructor() {
        super();
        this.attachShadow({ mode: 'open' });
        this.shadowRoot.innerHTML = `
            <style>
                :host { display: block; overflow: hidden; position: relative; background: #fff; font: 13px/18px Lato, "Open Sans", sans-serif; color: #000; }
                table { table-layout: fixed; width: 100%; border-spacing: 0; }
                td, th { box-sizing: border-box; height: 20px; padding: 1px 2px 0; border: solid #d0d7e5; border-width: 0 1px 1px 0; white-space: nowrap; font-weight: normal; }
                th { border-color: #9eb6ce; color: #27413e; padding: 1px 0 0; }
                thead th { background: linear-gradient(#f8fbfd, #d3dbe9); }
                thead th:first-child { background: linear-gradient(135deg, #a9c4e9 62%, #dfe9f5 62%); }
                tbody th { background: #e4ecf7; }
                th.on { background: #ffd58d; border-color: #f29536; }
                thead th.on { background: linear-gradient(#f9d99f, #f1c15f); border-left: 1px solid #f29536; }
                .bottom { border-bottom-color: #000; }
                .right { border-right-color: #000; }
                .num { text-align: right; }
                .money { text-align: right; padding-right: 7px; }
                .sel { position: relative; }
                .sel::before { content: ""; position: absolute; z-index: 1; inset: -1px; border: 3px double #000; }
                .sel::after { content: ""; position: absolute; z-index: 2; right: -3px; bottom: -3px; width: 4px; height: 4px; background: #000; border: solid #fff; border-width: 1px 0 0 1px; }
                ::slotted(*) { position: absolute; left: 557px; top: 40px; right: 0; }
            </style>
            ${this.table()}
            <slot></slot>`;
    }

    bordered(row, col) {
        const cells = CELLS[row];
        return Boolean(cells && cells.length > 1 && col >= 0 && col < cells.length);
    }

    cell(row, col) {
        const text = (CELLS[row] || [])[col] || '';
        const classes = [];
        if (this.bordered(row, col) || this.bordered(row + 1, col)) classes.push('bottom');
        if (this.bordered(row, col) || this.bordered(row, col + 1)) classes.push('right');
        if (col === 1 && text.endsWith('р.')) classes.push('money');
        else if (/^\d+$|%$|р\.$/.test(text)) classes.push('num');
        if (row === 10 && col === 2) classes.push('sel');
        return `<td class="${classes.join(' ')}">${text}</td>`;
    }

    table() {
        let html = '<table><colgroup><col style="width: 26px"><col style="width: 64px"><col style="width: 128px"><col style="width: 86px">';
        html += '<col style="width: 64px">'.repeat(10) + '<col></colgroup><thead><tr><th></th>';
        html += COLUMNS.map(c => `<th class="${c === 'C' ? 'on' : ''}">${c}</th>`).join('') + '<th></th></tr></thead><tbody>';
        for (let row = 1; row <= ROWS; row++) {
            const edge = this.bordered(row, 0) ? 'right' : '';
            html += `<tr><th class="${row === 10 ? 'on' : ''} ${edge}">${row}</th>`;
            for (let col = 0; col <= COLUMNS.length; col++) {
                html += this.cell(row, col);
            }
            html += '</tr>';
        }
        return html + '</tbody></table>';
    }
}
customElements.define('sheet-grid', SheetGrid);

define('text-note', `
    <style>
        :host { display: block; box-sizing: border-box; min-height: 115px; padding: 5px 9px; background: #fff; border: 1px solid #bcbcbc; font: 13px/18px Lato, "Open Sans", sans-serif; }
        div { white-space: pre-line; }
    </style>
    <div><slot></slot></div>
`);

define('sheet-tab', `
    <style>
        :host { display: flex; flex: none; }
        button { font: inherit; color: #15428b; height: 15px; line-height: 14px; padding: 0 5px; border: 0; border-bottom: 1px solid #8db2e3; background: linear-gradient(#d7e6fa, #c0d6f2); white-space: nowrap; }
        :host([active]) button { font-weight: bold; background: #fff; padding: 0 1px; }
    </style>
    <ui-icon name="slant"></ui-icon><button type="button"><slot></slot></button>
`);

define('excel-window', `
    <style>
        :host {
            display: flex; flex-direction: column; box-sizing: border-box; overflow: hidden;
            border: solid #7f8fa5; border-width: 1px 1px 0; border-radius: 7px 7px 0 0; padding: 0 3px; background: #d0dae6;
        }
        .caption { flex: 0 0 30px; margin: 0 -3px; display: flex; align-items: center; background: linear-gradient(#dfe5ee, #d3dbe7 40%, #dee4ec); border-bottom: 1px solid #f1f0e6; box-sizing: border-box; }
        .office { position: absolute; left: 4px; top: 5px; z-index: 1; }
        .qat { display: flex; align-items: center; gap: 5px; margin-left: 40px; padding: 0 12px 0 14px; height: 22px; border: 1px solid #a9bad0; border-left: 0; border-radius: 0 11px 11px 0; box-sizing: border-box; }
        .qat ui-icon:last-child { margin-left: 4px; }
        .more { margin-left: 7px; }
        h1 { flex: 1; font: inherit; font-size: 13px; margin: 0; color: #9a9da3; text-align: center; white-space: nowrap; padding-right: 106px; }
        .caption > .min { color: #a9afb8; margin-right: 2px; }
        .classic { display: flex; gap: 1px; background: #9db9eb; padding: 2px; margin-right: 3px; }
        .classic button { width: 16px; height: 21px; padding: 0; display: grid; place-items: center; color: #000; background: #ece9d8; border: 1px solid; border-color: #fff #716f64 #716f64 #fff; }
        .classic button:last-child { color: #aca899; margin-left: 1px; }
        .tabs { flex: 0 0 24px; margin: 0 -3px; display: flex; align-items: flex-end; padding-left: 48px; background: #bfdbff; }
        .mdi { margin-left: auto; display: flex; align-items: center; gap: 10px; color: #5f6c80; padding: 0 8px 4px 0; }
        .ribbon { flex: none; display: flex; gap: 3px; box-sizing: border-box; height: 90px; padding: 1px 2px; border: 1px solid #8db2e3; border-radius: 3px; background: linear-gradient(#dbe6f4, #cfdded 16px, #c7d8ed 17px, #e3f4ff); }
        .g1 { width: 103px; } .g2 { width: 177px; } .g3 { width: 294px; } .g4 { width: 157px; } .g5 { width: 58px; } .g6 { width: 118px; }
        .rule { flex: 0 0 1px; height: 55px; margin: 5px 3px 0 5px; background: #9bb7dc; box-shadow: 1px 0 #fff; }
        .formula { flex: none; margin: 2px 0 4px; height: 22px; box-sizing: border-box; display: flex; align-items: center; border: solid #6b8fb8; border-width: 1px 0; background: #fff; font: 13px/18px Lato, "Open Sans", sans-serif; }
        .formula input { font: inherit; color: #000; border: 0; padding: 0; height: 18px; min-width: 0; background: none; outline: none; }
        .name { width: 140px; text-align: center; }
        .formula down-arrow { margin-left: 6px; }
        .fx { align-self: stretch; width: 84px; box-sizing: border-box; margin: 0 7px; padding: 0 4px 0 5px; display: flex; align-items: center; justify-content: space-between; border: solid #8aa7cf; border-width: 0 1px; border-radius: 11px 0 0 11px; background: linear-gradient(#e3edf9, #b9cfea); }
        .fx i { width: 9px; height: 9px; border-radius: 50%; background: radial-gradient(#eee, #a9b3c2); }
        .text { flex: 1; }
        .expand { align-self: stretch; width: 16px; padding: 0 2px; border: 0; border-left: 1px solid #6b8fb8; background: linear-gradient(#f3f8fd, #c3d6ee); }
        .sheet { flex: 1; display: flex; min-height: 0; border-top: 1px solid #7d9dc4; }
        .sheet sheet-grid { flex: 1; margin-top: -1px; }
        .side { display: flex; flex-direction: column; background: #7c9dcb; }
        .side hr, .split { width: 12px; height: 3px; border: 1px solid #5b7fb5; background: #fff; margin: 1px; }
        .side scroll-bar { flex: 1; margin-left: 1px; }
        .bottom { flex: 0 0 15px; display: flex; background: #bcd2ee; border-bottom: 1px solid #7d9dc4; font-size: 12px; }
        .nav { display: flex; align-items: center; gap: 5px; padding: 0 7px 0 4px; border-right: 1px solid #8db2e3; }
        .nav button { border: 0; padding: 0; background: none; display: block; line-height: 0; }
        .sheets { flex: 1; display: flex; overflow: hidden; min-width: 0; padding-left: 2px; }
        .split { flex: none; width: 2px; height: 11px; }
        .bottom scroll-bar { flex: 0 0 379px; }
        .corner { width: 15px; background: #7c9dcb; }
        .status { flex: 0 0 21px; margin: 0 -3px; display: flex; align-items: center; color: #1e3b66; background: linear-gradient(#dbe9fb, #cfe1f8 6px, #b3cff3 7px, #dcebfd); }
        .status > span { padding: 0 7px 0 10px; line-height: 20px; border-right: 1px solid #9cbbe2; }
        .tools { margin-left: auto; align-self: stretch; display: flex; align-items: center; padding: 0 4px; border-left: 2px solid #7d9fce; background: linear-gradient(#c8dcf7, #a9c6ef 8px, #87abdd 9px, #a8c6ee); }
        .views { display: flex; border: 1px solid #7f8fa5; border-radius: 2px; }
        .views button { width: 18px; height: 16px; padding: 0; border: 0; background: #d8dce3; display: grid; place-items: center; }
        .zoom { color: #8c96a6; margin: 0 9px 0 8px; }
        .tools > ui-icon { margin: 5px 0 0 7px; }
    </style>
    <header class="caption">
        <ui-icon class="office" name="office"></ui-icon>
        <div class="qat"><ui-icon name="savegray"></ui-icon><ui-icon name="undo"></ui-icon><down-arrow></down-arrow><ui-icon name="redo"></ui-icon><down-arrow muted></down-arrow><ui-icon name="form"></ui-icon></div>
        <down-arrow class="more" dark></down-arrow>
        <h1>работа по Excel(самостоятельная) - Microsoft Excel</h1>
        <ui-icon class="min" name="min"></ui-icon>
        <div class="classic">
            <button type="button" aria-label="Свернуть"><ui-icon name="min"></ui-icon></button>
            <button type="button" aria-label="Развернуть"><ui-icon name="max"></ui-icon></button>
            <button type="button" aria-label="Закрыть"><ui-icon name="close"></ui-icon></button>
        </div>
    </header>
    <nav class="tabs">
        <ribbon-tab>Главная</ribbon-tab>
        <ribbon-tab>Вставка</ribbon-tab>
        <ribbon-tab>Разметка страницы</ribbon-tab>
        <ribbon-tab>Формулы</ribbon-tab>
        <ribbon-tab active>Данные</ribbon-tab>
        <ribbon-tab>Рецензирование</ribbon-tab>
        <ribbon-tab>Вид</ribbon-tab>
        <div class="mdi"><ui-icon name="help"></ui-icon><ui-icon name="min"></ui-icon><ui-icon name="restore"></ui-icon><ui-icon name="close"></ui-icon></div>
    </nav>
    <div class="ribbon">
        <ribbon-group class="g1" collapsed>
            <ribbon-button large icon="getdata" label="Получить|внешние данные" arrow></ribbon-button>
        </ribbon-group>
        <ribbon-group class="g2">
            <ribbon-button large icon="refresh" label="Обновить|все" arrow muted></ribbon-button>
            <ribbon-column>
                <ribbon-button icon="connections" label="Подключения" muted></ribbon-button>
                <ribbon-button icon="properties" label="Свойства" muted></ribbon-button>
                <ribbon-button icon="links" label="Изменить связи" muted></ribbon-button>
            </ribbon-column>
            <span slot="label">Подключения</span>
        </ribbon-group>
        <ribbon-group class="g3">
            <ribbon-column spread>
                <ribbon-button icon="sortaz" muted></ribbon-button>
                <ribbon-button icon="sortza" muted></ribbon-button>
            </ribbon-column>
            <ribbon-button large icon="sort" label="Сортировка" muted></ribbon-button>
            <div class="rule"></div>
            <ribbon-button large icon="funnel" label="Фильтр" muted></ribbon-button>
            <ribbon-column>
                <ribbon-button icon="clear" label="Очистить" muted></ribbon-button>
                <ribbon-button icon="reapply" label="Применить повторно" muted></ribbon-button>
                <ribbon-button icon="advanced" label="Дополнительно" muted></ribbon-button>
            </ribbon-column>
            <span slot="label">Сортировка и фильтр</span>
        </ribbon-group>
        <ribbon-group class="g4">
            <ribbon-button large icon="textcols" label="Текст по|столбцам" muted></ribbon-button>
            <ribbon-button large icon="dedupe" label="Удалить|дубликаты" muted></ribbon-button>
            <ribbon-column>
                <ribbon-button icon="validate" arrow muted></ribbon-button>
                <ribbon-button icon="consolidate" muted></ribbon-button>
                <ribbon-button icon="whatif" arrow muted></ribbon-button>
            </ribbon-column>
            <span slot="label">Работа с данными</span>
        </ribbon-group>
        <ribbon-group class="g5" collapsed>
            <ribbon-button large icon="outline" label="Структура|" arrow></ribbon-button>
        </ribbon-group>
        <ribbon-group class="g6">
            <ribbon-column>
                <ribbon-button icon="solver" label="Поиск решения"></ribbon-button>
                <ribbon-button icon="analysis" label="Анализ данных"></ribbon-button>
            </ribbon-column>
            <span slot="label">Анализ</span>
        </ribbon-group>
    </div>
    <div class="formula">
        <input class="name" type="text" aria-label="Имя" value="C10">
        <down-arrow dark></down-arrow>
        <div class="fx"><i></i><ui-icon name="fx"></ui-icon></div>
        <input class="text" type="text" aria-label="Формула" value="=БС($B$4;A10;;-$B$3;1)">
        <button class="expand" type="button" aria-label="Развернуть строку формул"><ui-icon name="expand"></ui-icon></button>
    </div>
    <div class="sheet">
        <sheet-grid><text-note>1. Фирма поместила в коммерческий банк 45000&nbsp; на 6 лет по
10,5 %. Какая сумма окажется на счете, если проценты
начисляются ежегодно.
2. Рассчитать какую сумму надо поместить в банк на тех же
условиях, чтобы накопить 250000.</text-note></sheet-grid>
        <div class="side"><hr><scroll-bar size="677" after="40"></scroll-bar></div>
    </div>
    <div class="bottom">
        <div class="nav">
            <button type="button" aria-label="Первый лист"><ui-icon name="first"></ui-icon></button>
            <button type="button" aria-label="Предыдущий лист"><ui-icon name="prev"></ui-icon></button>
            <button type="button" aria-label="Следующий лист"><ui-icon name="next"></ui-icon></button>
            <button type="button" aria-label="Последний лист"><ui-icon name="last"></ui-icon></button>
        </div>
        <div class="sheets">
            <sheet-tab>Исходная для сводной</sheet-tab>
            <sheet-tab>Лист1</sheet-tab>
            <sheet-tab active>Подбор параметра</sheet-tab>
            <sheet-tab>Сценарий</sheet-tab>
            <sheet-tab>Структура с</sheet-tab>
        </div>
        <div class="split"></div>
        <scroll-bar horizontal size="298" after="44"></scroll-bar>
        <div class="split"></div>
        <div class="corner"></div>
    </div>
    <footer class="status">
        <span>Укажите</span>
        <div class="tools">
            <div class="views">
                <button type="button" aria-label="Обычный"><ui-icon name="normal"></ui-icon></button>
                <button type="button" aria-label="Разметка"><ui-icon name="layout"></ui-icon></button>
                <button type="button" aria-label="Страничный"><ui-icon name="breaks"></ui-icon></button>
            </div>
            <div class="zoom">100%</div>
            <zoom-slider value="50" nothumb></zoom-slider>
            <ui-icon name="grip"></ui-icon>
        </div>
    </footer>
`);

define('goal-dialog', `
    <style>
        :host { display: block; box-sizing: border-box; border: 3px solid #0831d9; border-top: 0; border-radius: 7px 7px 0 0; background: #ece9d8; font: 11px/14px "DejaVu Sans Condensed", sans-serif; color: #000; overflow: hidden; }
        header { height: 29px; margin: 0 -3px; padding: 1px 5px 0 6px; box-sizing: border-box; display: flex; align-items: center; gap: 2px; background: linear-gradient(#0a5be8, #3c8cf8 3px, #0855dd 6px, #0560f0 20px, #0345c8); }
        h2 { flex: 1; margin: 0; font: bold 12px/16px "DejaVu Sans Condensed", sans-serif; color: #fff; text-shadow: 1px 1px #0f1089; }
        header button { padding: 0; border: 0; background: none; line-height: 0; }
        form { display: grid; grid-template-columns: 1fr 102px; row-gap: 3px; padding: 7px 6px 8px 5px; align-items: center; }
        label { white-space: nowrap; padding-top: 2px; }
        .field { display: flex; height: 20px; box-sizing: border-box; border: 1px solid #7f9db9; background: #fff; }
        .field input { flex: 1; min-width: 0; border: 0; padding: 1px 3px 0; font: inherit; outline: none; background: none; }
        .field button { padding: 0; border: 0; background: none; line-height: 0; }
        .buttons { grid-column: 1 / 3; display: flex; justify-content: flex-end; gap: 10px; margin: 8px 1px 0 0; }
        .buttons button { width: 74px; height: 22px; font: inherit; padding: 0; border: 1px solid #003c74; border-radius: 3px; background: linear-gradient(#fff, #ecebe5 90%, #d6d0c5); }
        .buttons .ok { box-shadow: inset 0 0 0 2px #9db9eb; }
    </style>
    <header>
        <h2>Подбор параметра</h2>
        <button type="button" aria-label="Справка"><ui-icon name="qmark"></ui-icon></button>
        <button type="button" aria-label="Закрыть"><ui-icon name="xmark"></ui-icon></button>
    </header>
    <form>
        <label for="target">Установить в <u>я</u>чейке:</label>
        <div class="field"><input id="target" type="text" value="$C$31"><button type="button" aria-label="Выбрать ячейку"><ui-icon name="pick"></ui-icon></button></div>
        <label for="value">Зна<u>ч</u>ение:</label>
        <div class="field"><input id="value" type="text" value="250000"></div>
        <label for="changing"><u>И</u>зменяя значение ячейки:</label>
        <div class="field"><input id="changing" type="text" value="$B$19"><button type="button" aria-label="Выбрать ячейку"><ui-icon name="pick"></ui-icon></button></div>
        <div class="buttons"><button type="button" class="ok">ОК</button><button type="button">Отмена</button></div>
    </form>
`);

define('task-button', `
    <style>
        :host { display: block; flex: 0 1 159px; min-width: 0; }
        button { width: 100%; height: 25px; display: flex; align-items: center; gap: 4px; padding: 0 9px; border: 0; border-radius: 3px; font: 11px/14px "DejaVu Sans Condensed", sans-serif; color: #fff; white-space: nowrap; background: linear-gradient(#5e9bfb, #3c81f3 4px, #3a7bee 20px, #2a66d8); }
        :host([active]) button { background: #1e4fb4; box-shadow: inset 1px 1px 2px #0d2f7d; }
    </style>
    <button type="button"><slot name="icon"></slot><slot></slot></button>
`);

define('task-bar', `
    <style>
        :host { display: flex; align-items: center; height: 29px; font: 11px/14px "DejaVu Sans Condensed", sans-serif; color: #fff; background: linear-gradient(#3168d5, #4a94f2 2px, #2560dc 5px, #245edb 24px, #1941a5); }
        .start { width: 96px; height: 29px; margin-right: 9px; padding: 0 0 0 10px; border: 0; border-radius: 0 10px 12px 0; display: flex; align-items: center; gap: 5px; color: #fff; font: italic bold 17px/20px "Open Sans", sans-serif; text-shadow: 1px 1px 2px #1f4d1d; background: linear-gradient(#5fab5c, #3e9a3c 5px, #389037 20px, #2c7a2b); box-shadow: inset -2px 0 4px #1f5e1f; }
        .tasks { flex: 1; display: flex; gap: 2px; min-width: 0; }
        .lang { background: #316ac5; padding: 1px 1px; }
        .tray { display: flex; align-items: center; gap: 3px; height: 29px; margin-left: 20px; padding: 0 13px 0 0; border-left: 1px solid #0b3fa0; background: linear-gradient(#0c78d8, #19b9f3 2px, #1290e8 6px, #1399ee 24px, #0d70c8); }
        .tray ui-icon:first-child { margin-left: -10px; }
        time { margin-left: 5px; }
    </style>
    <button class="start" type="button"><ui-icon name="flag"></ui-icon>пуск</button>
    <div class="tasks">
        <task-button><ui-icon slot="icon" name="folder"></ui-icon>2-ой семестр</task-button>
        <task-button active><ui-icon slot="icon" name="excel"></ui-icon>Microsoft Excel - раб...</task-button>
        <task-button><ui-icon slot="icon" name="word"></ui-icon>Задания по Excel на ...</task-button>
    </div>
    <span class="lang">RU</span>
    <div class="tray"><ui-icon name="chevron"></ui-icon><ui-icon name="usb"></ui-icon><ui-icon name="kasper"></ui-icon><ui-icon name="disc"></ui-icon><time>12:30</time></div>
`);

define('xp-desktop', `
    <style>
        :host { display: flex; flex-direction: column; height: 100vh; overflow: hidden; }
        main { flex: 1; position: relative; min-height: 0; }
        ::slotted(excel-window) { position: absolute; inset: 4px 178px 23px 107px; }
        ::slotted(goal-dialog) { position: absolute; left: 591px; top: 459px; width: 264px; }
    </style>
    <main><slot></slot></main>
    <slot name="taskbar"></slot>
`);
</script>
</body>
</html>
